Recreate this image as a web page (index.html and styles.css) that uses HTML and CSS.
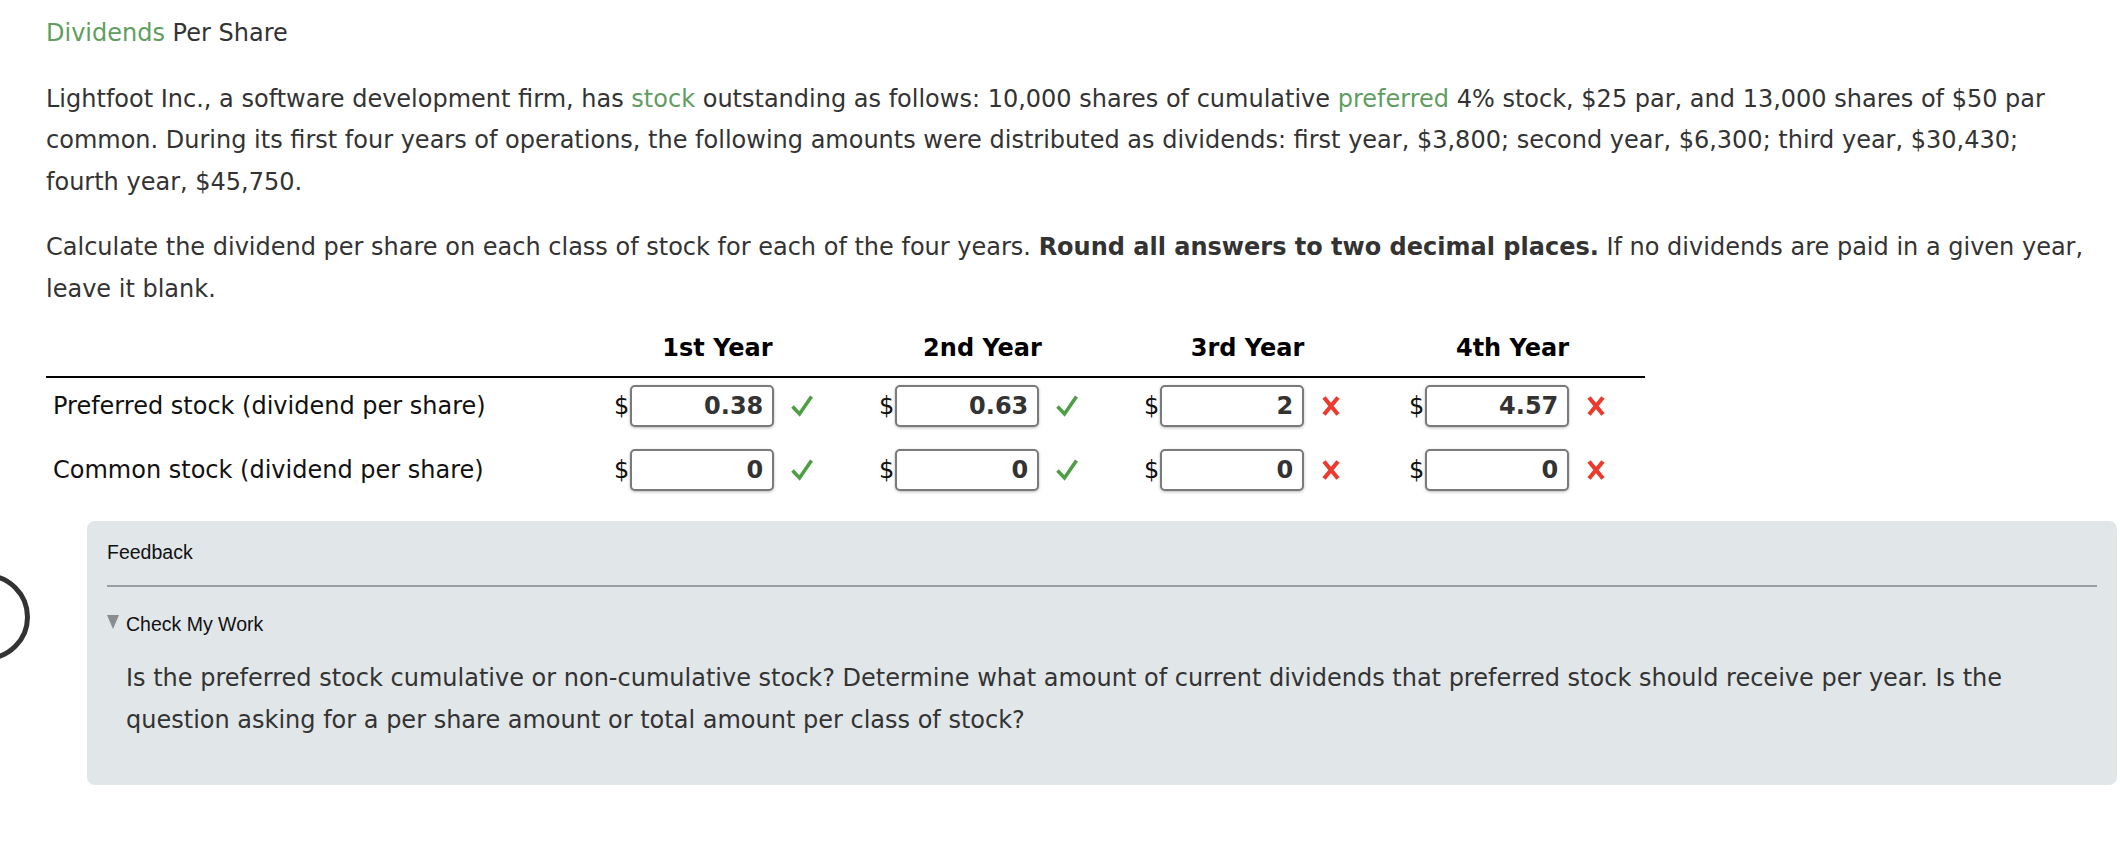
FILE: index.html
```html
<!DOCTYPE html>
<html>
<head>
<meta charset="utf-8">
<link rel="stylesheet" href="styles.css">
</head>
<body>
<div class="ring"></div>
<main class="page">
  <h1 class="title"><span class="term">Dividends</span> Per Share</h1>
  <p class="para">Lightfoot Inc., a software development firm, has <span class="term">stock</span> outstanding as follows: 10,000 shares of cumulative <span class="term">preferred</span> 4% stock, $25 par, and 13,000 shares of $50 par common. During its first four years of operations, the following amounts were distributed as dividends: first year, $3,800; second year, $6,300; third year, $30,430; fourth year, $45,750.</p>
  <p class="para">Calculate the dividend per share on each class of stock for each of the four years. <strong>Round all answers to two decimal places.</strong> If no dividends are paid in a given year, leave it blank.</p>

  <div class="grid">
    <div class="hcell"></div>
    <div class="hcell">1st Year</div>
    <div class="hcell">2nd Year</div>
    <div class="hcell">3rd Year</div>
    <div class="hcell">4th Year</div>

    <div class="label">Preferred stock (dividend per share)</div>
    <div class="cell"><span class="cur">$</span><span class="box">0.38</span><svg class="mark" viewBox="0 0 24 24"><path class="ok" d="M2.5 12.5 L9.5 20 L21.5 2.5"/></svg></div>
    <div class="cell"><span class="cur">$</span><span class="box">0.63</span><svg class="mark" viewBox="0 0 24 24"><path class="ok" d="M2.5 12.5 L9.5 20 L21.5 2.5"/></svg></div>
    <div class="cell"><span class="cur">$</span><span class="box">2</span><svg class="mark" viewBox="0 0 24 24"><path class="bad" d="M4 3.5 L18 20.5 M18 3.5 L4 20.5"/></svg></div>
    <div class="cell"><span class="cur">$</span><span class="box">4.57</span><svg class="mark" viewBox="0 0 24 24"><path class="bad" d="M4 3.5 L18 20.5 M18 3.5 L4 20.5"/></svg></div>

    <div class="label">Common stock (dividend per share)</div>
    <div class="cell"><span class="cur">$</span><span class="box">0</span><svg class="mark" viewBox="0 0 24 24"><path class="ok" d="M2.5 12.5 L9.5 20 L21.5 2.5"/></svg></div>
    <div class="cell"><span class="cur">$</span><span class="box">0</span><svg class="mark" viewBox="0 0 24 24"><path class="ok" d="M2.5 12.5 L9.5 20 L21.5 2.5"/></svg></div>
    <div class="cell"><span class="cur">$</span><span class="box">0</span><svg class="mark" viewBox="0 0 24 24"><path class="bad" d="M4 3.5 L18 20.5 M18 3.5 L4 20.5"/></svg></div>
    <div class="cell"><span class="cur">$</span><span class="box">0</span><svg class="mark" viewBox="0 0 24 24"><path class="bad" d="M4 3.5 L18 20.5 M18 3.5 L4 20.5"/></svg></div>
  </div>

  <section class="feedback">
    <div class="fb-title">Feedback</div>
    <div class="fb-rule"></div>
    <div class="fb-toggle"><span class="tri"></span>Check My Work</div>
    <p class="fb-text">Is the preferred stock cumulative or non-cumulative stock? Determine what amount of current dividends that preferred stock should receive per year. Is the question asking for a per share amount or total amount per class of stock?</p>
  </section>
</main>
</body>
</html>
```
FILE: styles.css
```css
html, body {
  margin: 0;
  padding: 0;
  background: #ffffff;
}
body {
  font-family: "DejaVu Sans", Verdana, sans-serif;
  font-size: 24px;
  line-height: 41.5px;
  color: #333333;
  position: relative;
  overflow: hidden;
}
.page {
  padding: 13px 3px 0 46px;
}
.title {
  margin: 0;
  font-size: 24px;
  font-weight: normal;
  line-height: 41.5px;
}
.term {
  color: #5f9e5f;
}
.para {
  margin: 24px 20px 0 0;
}
.grid {
  display: grid;
  grid-template-columns: 539px repeat(4, 265px);
  margin-top: 10px;
}
.hcell {
  text-align: center;
  font-weight: bold;
  color: #000;
  height: 56px;
  line-height: 56px;
  border-bottom: 2px solid #000;
}
.label {
  color: #111;
  padding-left: 7px;
  padding-top: 7px;
  height: 64px;
  box-sizing: border-box;
  line-height: 42px;
}
.cell {
  height: 64px;
  box-sizing: border-box;
  display: flex;
  align-items: flex-start;
  padding: 7px 0 0 29px;
}
.cur {
  color: #111;
  margin-right: 1px;
  line-height: 42px;
}
.box {
  width: 144px;
  height: 42px;
  box-sizing: border-box;
  border: 2px solid #7a7a7a;
  border-radius: 5px;
  box-shadow: 0 1px 3px rgba(0,0,0,0.28);
  text-align: right;
  padding-right: 9px;
  font-weight: bold;
  line-height: 38px;
  color: #333;
  background: #fff;
}
.mark {
  width: 24px;
  height: 24px;
  margin: 9px 0 0 16px;
  fill: none;
}
.ok {
  stroke: #4e9e44;
  stroke-width: 3.6;
  stroke-linejoin: miter;
}
.bad {
  stroke: #ec3b2c;
  stroke-width: 4.2;
}
.feedback {
  margin: 15px 0 0 41px;
  background: #e1e6e9;
  border-radius: 8px;
  padding: 18px 20px 44px 20px;
}
.fb-title {
  font-family: "Liberation Sans", Arial, sans-serif;
  font-size: 19.5px;
  line-height: 26px;
  color: #111;
}
.fb-rule {
  margin-top: 20px;
  height: 2px;
  background: #999ea2;
}
.fb-toggle {
  margin-top: 23px;
  font-family: "Liberation Sans", Arial, sans-serif;
  font-size: 19.5px;
  line-height: 28px;
  color: #111;
  display: flex;
  align-items: center;
}
.tri {
  width: 0;
  height: 0;
  border-left: 6px solid transparent;
  border-right: 6px solid transparent;
  border-top: 14px solid #8a8d90;
  margin-right: 7px;
  margin-top: -4px;
}
.fb-text {
  margin: 20px 0 0 19px;
}
.ring {
  position: absolute;
  left: -58px;
  top: 573px;
  width: 78px;
  height: 78px;
  border: 5px solid #333;
  border-radius: 50%;
}
```
